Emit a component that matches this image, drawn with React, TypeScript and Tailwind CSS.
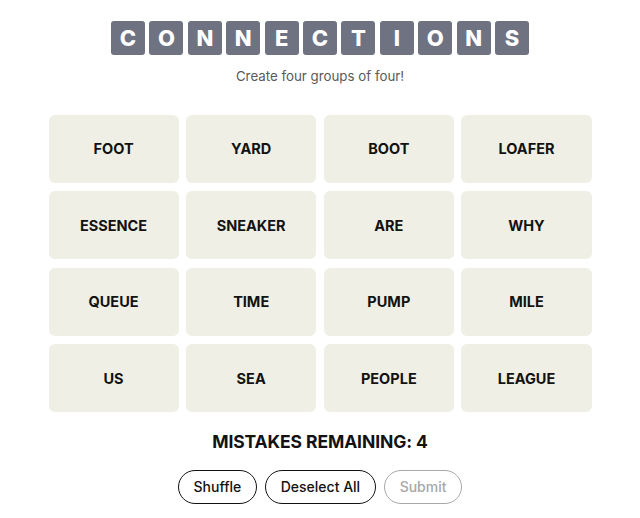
const TITLE = 'CONNECTIONS'.split('')

const WORDS = [
  'FOOT', 'YARD', 'BOOT', 'LOAFER',
  'ESSENCE', 'SNEAKER', 'ARE', 'WHY',
  'QUEUE', 'TIME', 'PUMP', 'MILE',
  'US', 'SEA', 'PEOPLE', 'LEAGUE',
]

export default function App() {
  return (
    <div className="w-[640px] h-[518px] bg-white flex flex-col items-center font-['Inter',sans-serif] text-[#121212]">
      <div className="mt-[21px] flex gap-[4.4px]">
        {TITLE.map((c, i) => (
          <div
            key={i}
            className="w-[34px] h-[34px] rounded-[3px] bg-[#6e7281] text-white flex items-center justify-center text-[22px] font-extrabold leading-none"
          >
            {c}
          </div>
        ))}
      </div>
      <p className="mt-[12px] text-[13.3px] text-[#5a5a5a]">Create four groups of four!</p>

      <div className="mt-[28px] grid grid-cols-4 gap-x-[7.6px] gap-y-[8.5px] w-[543px]">
        {WORDS.map((w) => (
          <div
            key={w}
            className="h-[68px] rounded-[6px] bg-[#efefe6] flex items-center justify-center text-[14.5px] font-bold"
          >
            {w}
          </div>
        ))}
      </div>

      <div className="mt-[17px] text-[17.5px] font-bold tracking-[-0.1px]">MISTAKES REMAINING: 4</div>

      <div className="mt-[14px] flex gap-[8.5px]">
        <button className="h-[34px] px-[14.5px] rounded-full border-[1.5px] border-[#121212] text-[14px] font-medium">
          Shuffle
        </button>
        <button className="h-[34px] px-[14.5px] rounded-full border-[1.5px] border-[#121212] text-[14px] font-medium">
          Deselect All
        </button>
        <button className="h-[34px] px-[14.5px] rounded-full border-[1.5px] border-[#a8a8a8] text-[#a8a8a8] text-[14px] font-medium">
          Submit
        </button>
      </div>
    </div>
  )
}
